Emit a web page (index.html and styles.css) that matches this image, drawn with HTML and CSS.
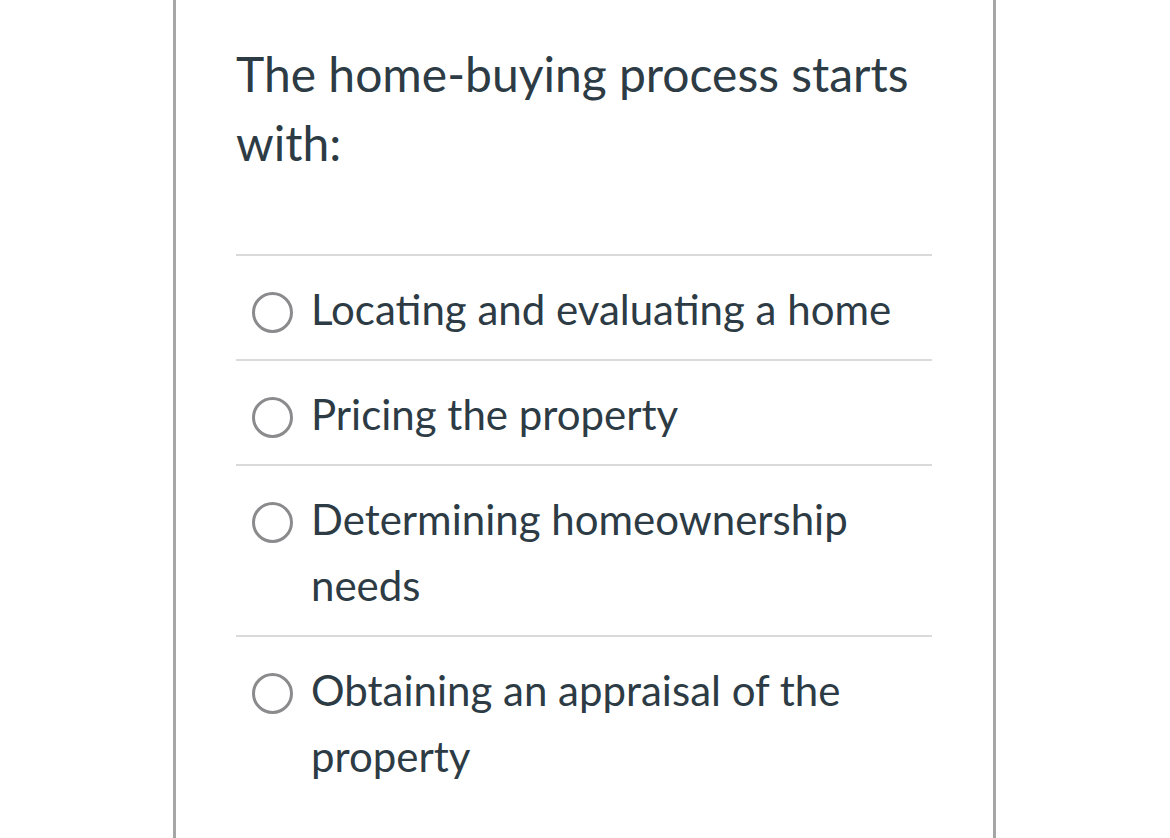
FILE: index.html
```html
<!DOCTYPE html>
<html lang="en">
<head>
  <meta charset="UTF-8">
  <title>Quiz question</title>
  <link rel="stylesheet" href="styles.css">
</head>
<body>
  <div class="quiz">
    <div class="question-text">The home-buying process starts with:</div>
    <ul class="answers">
      <li class="answer"><span class="radio"></span><span class="answer-text">Locating and evaluating a home</span></li>
      <li class="answer"><span class="radio"></span><span class="answer-text">Pricing the property</span></li>
      <li class="answer"><span class="radio"></span><span class="answer-text">Determining homeownership needs</span></li>
      <li class="answer"><span class="radio"></span><span class="answer-text">Obtaining an appraisal of the property</span></li>
    </ul>
  </div>
</body>
</html>
```

FILE: styles.css
```css
*{
  margin: 0;
  padding: 0;
  box-sizing: border-box;
}
body{
  background-color: #fff;
  font-family: Lato, "Liberation Sans", sans-serif;
  color: #2d3b45;
}
.quiz{
  width: 823px;
  min-height: 100vh;
  margin-left: 173px;
  padding: 39px 61px 0 60px;
  border-left: 3px solid #a6a6a6;
  border-right: 3px solid #a6a6a6;
}
.question-text{
  font-size: 48px;
  line-height: 69px;
  margin-bottom: 77px;
}
.answers{
  list-style-type: none;
}
.answer{
  display: flex;
  align-items: flex-start;
  gap: 18px;
  padding: 20px 0 17px 16px;
  border-top: 2px solid #dadada;
}
.radio{
  flex: none;
  width: 41px;
  height: 41px;
  margin-top: 16px;
  border: 3.5px solid #8b8b8e;
  border-radius: 50%;
}
.answer-text{
  font-size: 42px;
  line-height: 66px;
}
```
